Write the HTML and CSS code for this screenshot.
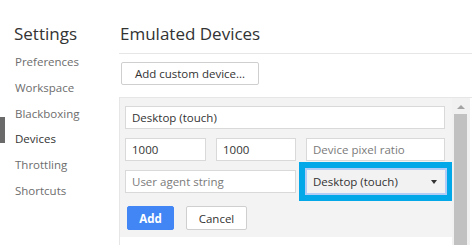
FILE: index.html
```html
<!DOCTYPE html>
<html>
<head>
<meta charset="utf-8">
<link rel="stylesheet" href="styles.css">
</head>
<body>
<div class="app">
  <aside class="sidebar">
    <div class="sidebar-title">Settings</div>
    <ul class="nav">
      <li>Preferences</li>
      <li>Workspace</li>
      <li>Blackboxing</li>
      <li class="selected">Devices</li>
      <li>Throttling</li>
      <li>Shortcuts</li>
    </ul>
  </aside>
  <main class="main">
    <div class="header">Emulated Devices</div>
    <div class="toolbar">
      <button class="btn">Add custom device...</button>
    </div>
    <div class="list">
      <div class="items">
        <div class="editor">
          <div class="row">
            <div class="field full">Desktop (touch)</div>
          </div>
          <div class="row row2">
            <div class="field w81">1000</div>
            <div class="field w80">1000</div>
            <div class="field w139 placeholder">Device pixel ratio</div>
          </div>
          <div class="row row3">
            <div class="field w171 placeholder">User agent string</div>
            <div class="select">
              <span>Desktop (touch)</span>
              <span class="caret"></span>
            </div>
          </div>
          <div class="row buttons">
            <button class="btn primary">Add</button>
            <button class="btn cancel">Cancel</button>
          </div>
        </div>
        <div class="rest"></div>
      </div>
      <div class="scrollbar">
        <div class="arrow"></div>
        <div class="thumb"></div>
      </div>
    </div>
  </main>
</div>
</body>
</html>
```

FILE: styles.css
```css
html, body {
  margin: 0;
  padding: 0;
  background: #fff;
}
body {
  font-family: "Open Sans", "Noto Sans", sans-serif;
  color: #333;
  width: 472px;
  height: 245px;
  overflow: hidden;
}
.app {
  display: flex;
  height: 245px;
}
.sidebar {
  width: 119px;
  flex: none;
  position: relative;
}
.sidebar-title {
  font-size: 17px;
  line-height: 20px;
  margin: 24px 0 0 14px;
  color: #333;
}
.nav {
  list-style: none;
  margin: 5px 0 0;
  padding: 0;
}
.nav li {
  position: relative;
  font-size: 11.5px;
  line-height: 25.8px;
  height: 25.8px;
  padding-left: 15px;
  color: #6d6d6d;
}
.nav li.selected {
  color: #333;
}
.nav li.selected::before {
  content: "";
  position: absolute;
  left: 0;
  top: -9px;
  width: 5px;
  height: 26px;
  background: #6a6a6a;
}
.main {
  flex: 1;
  display: flex;
  flex-direction: column;
}
.header {
  font-size: 17px;
  line-height: 20px;
  height: 54px;
  box-sizing: border-box;
  padding: 24px 0 0 1px;
  border-bottom: 1px solid #e6e6e6;
  color: #333;
}
.toolbar {
  padding: 8px 0 12px 2px;
  display: flex;
}
.btn {
  font-family: "Open Sans", "Noto Sans", sans-serif;
  font-size: 11.5px;
  height: 23px;
  padding: 0 12px;
  background: #fff;
  border: 1px solid #cfcfcf;
  border-radius: 2px;
  color: #333;
  box-sizing: border-box;
}
.toolbar .btn {
  width: 138px;
}
.list {
  border-top: 1px solid #e6e6e6;
  display: flex;
  flex: 1;
}
.items {
  width: 333px;
  flex: none;
  border-left: 1px solid #e6e6e6;
  box-sizing: border-box;
  display: flex;
  flex-direction: column;
}
.editor {
  background: #f3f3f3;
  padding: 8px 0 7px 5px;
}
.row {
  display: flex;
  align-items: center;
  gap: 10px;
}
.row2 {
  margin-top: 9px;
}
.row3 {
  margin-top: 7px;
  gap: 9px;
}
.field {
  height: 23px;
  box-sizing: border-box;
  background: #fff;
  border: 1px solid #d9d9d9;
  font-size: 11.5px;
  line-height: 21px;
  padding-left: 6px;
  color: #333;
  white-space: nowrap;
  overflow: hidden;
}
.field.placeholder {
  color: #7a7a7a;
}
.full { width: 320px; }
.w81 { width: 81px; }
.w80 { width: 80px; }
.w139 { width: 139px; }
.w171 { width: 171px; }
.select {
  width: 142px;
  height: 27px;
  box-sizing: border-box;
  border: 2px solid #b4cdf6;
  border-radius: 0;
  background: #f2f2f2;
  font-size: 11.5px;
  line-height: 23px;
  padding: 0 8px 0 6px;
  display: flex;
  justify-content: space-between;
  align-items: center;
  outline: 6px solid #02a8e8;
  outline-offset: 0;
  color: #333;
}
.caret {
  width: 0;
  height: 0;
  border-left: 3.5px solid transparent;
  border-right: 3.5px solid transparent;
  border-top: 4px solid #333;
}
.buttons {
  margin-top: 11px;
  padding-left: 2px;
  gap: 12px;
}
.btn.primary {
  background: #4285f4;
  border-color: #4285f4;
  color: #fff;
  font-weight: bold;
  width: 47px;
  height: 24px;
  padding: 0;
}
.btn.cancel {
  width: 61px;
  height: 24px;
  padding: 0;
}
.rest {
  flex: 1;
  background: #fff;
}
.scrollbar {
  width: 18px;
  flex: none;
  background: #f1f1f1;
  display: flex;
  flex-direction: column;
  align-items: center;
}
.arrow {
  margin-top: 7px;
  width: 0;
  height: 0;
  border-left: 4px solid transparent;
  border-right: 4px solid transparent;
  border-bottom: 4px solid #a3a3a3;
}
.thumb {
  margin-top: 5px;
  width: 13px;
  margin-right: 2px;
  flex: 1;
  background: #c1c1c1;
}
```
